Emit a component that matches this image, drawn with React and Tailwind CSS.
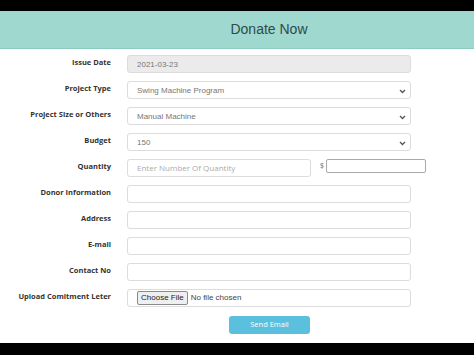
import React from 'react';

const labelFont = { fontFamily: '"Open Sans", "Liberation Sans", sans-serif' };

const Chevron = () => (
    <svg width="7" height="5" viewBox="0 0 7 5" className="absolute right-[4px] top-[7px]">
        <polyline points="1,1 3.5,3.5 6,1" fill="none" stroke="#555" strokeWidth="1.3" />
    </svg>
);

const Row = ({ label, children }) => (
    <div className="flex items-start">
        <div className="w-[111px] shrink-0 pt-[1px] text-right text-[7.5px] font-bold leading-[12px] text-[#333]" style={labelFont}>
            {label}
        </div>
        <div className="ml-[16px] flex items-start">{children}</div>
    </div>
);

const Box = ({ children, className = '', w = 'w-[284px]', bg = 'bg-white' }) => (
    <div className={`relative h-[18px] ${w} ${bg} rounded-[3px] border border-[#dcdcdc] px-[9px] text-[8px] leading-[16px] text-[#777] ${className}`}>
        {children}
    </div>
);

const Select = ({ value }) => (
    <Box>
        <span className="font-['Liberation_Sans',sans-serif]">{value}</span>
        <Chevron />
    </Box>
);

export default function App() {
    return (
        <div className="flex h-[355px] w-[474px] flex-col bg-black">
            <div className="h-[11px]" />
            <div className="flex h-[332px] flex-col bg-white">
                <div className="flex h-[38px] items-center justify-center border-b border-[#8ccbc1] bg-[#9fd8cf] pl-[64px]">
                    <span className="font-['Liberation_Sans',sans-serif] text-[14px] text-[#2f4b4b]">Donate Now</span>
                </div>
                <div className="flex flex-col gap-[8px] pt-[6px]">
                    <Row label="Issue Date">
                        <Box bg="bg-[#ebebeb]">
                            <span className="font-['Liberation_Sans',sans-serif]">2021-03-23</span>
                        </Box>
                    </Row>
                    <Row label="Project Type">
                        <Select value="Swing Machine Program" />
                    </Row>
                    <Row label="Project Size or Others">
                        <Select value="Manual Machine" />
                    </Row>
                    <Row label="Budget">
                        <Select value="150" />
                    </Row>
                    <Row label="Quantity">
                        <Box w="w-[184px]">
                            <span className="text-[#aaa]" style={labelFont}>Enter Number Of Quantity</span>
                        </Box>
                        <span className="ml-[9px] mr-[2px] text-[7px] leading-[14px] text-[#666]" style={labelFont}>$</span>
                        <div className="h-[14px] w-[100px] rounded-[2px] border border-[#a9a9a9] bg-white" />
                    </Row>
                    <Row label="Donor Information"><Box /></Row>
                    <Row label="Address"><Box /></Row>
                    <Row label="E-mail"><Box /></Row>
                    <Row label="Contact No"><Box /></Row>
                    <Row label="Upload Comitment Leter">
                        <Box className="flex items-center gap-[3px] px-[6px]">
                            <span className="h-[14px] rounded-[2px] border border-[#8a8a8a] bg-[#efefef] px-[3px] font-['Liberation_Sans',sans-serif] text-[8px] leading-[12px] text-[#222]">
                                Choose File
                            </span>
                            <span className="font-['Liberation_Sans',sans-serif] text-[8px] text-[#444]">No file chosen</span>
                        </Box>
                    </Row>
                    <div className="flex pl-[229px] pt-[1px]">
                        <button className="h-[18px] w-[81px] rounded-[3px] bg-[#5bc0de] text-[7.5px] text-white" style={labelFont}>
                            Send Email
                        </button>
                    </div>
                </div>
            </div>
        </div>
    );
}
